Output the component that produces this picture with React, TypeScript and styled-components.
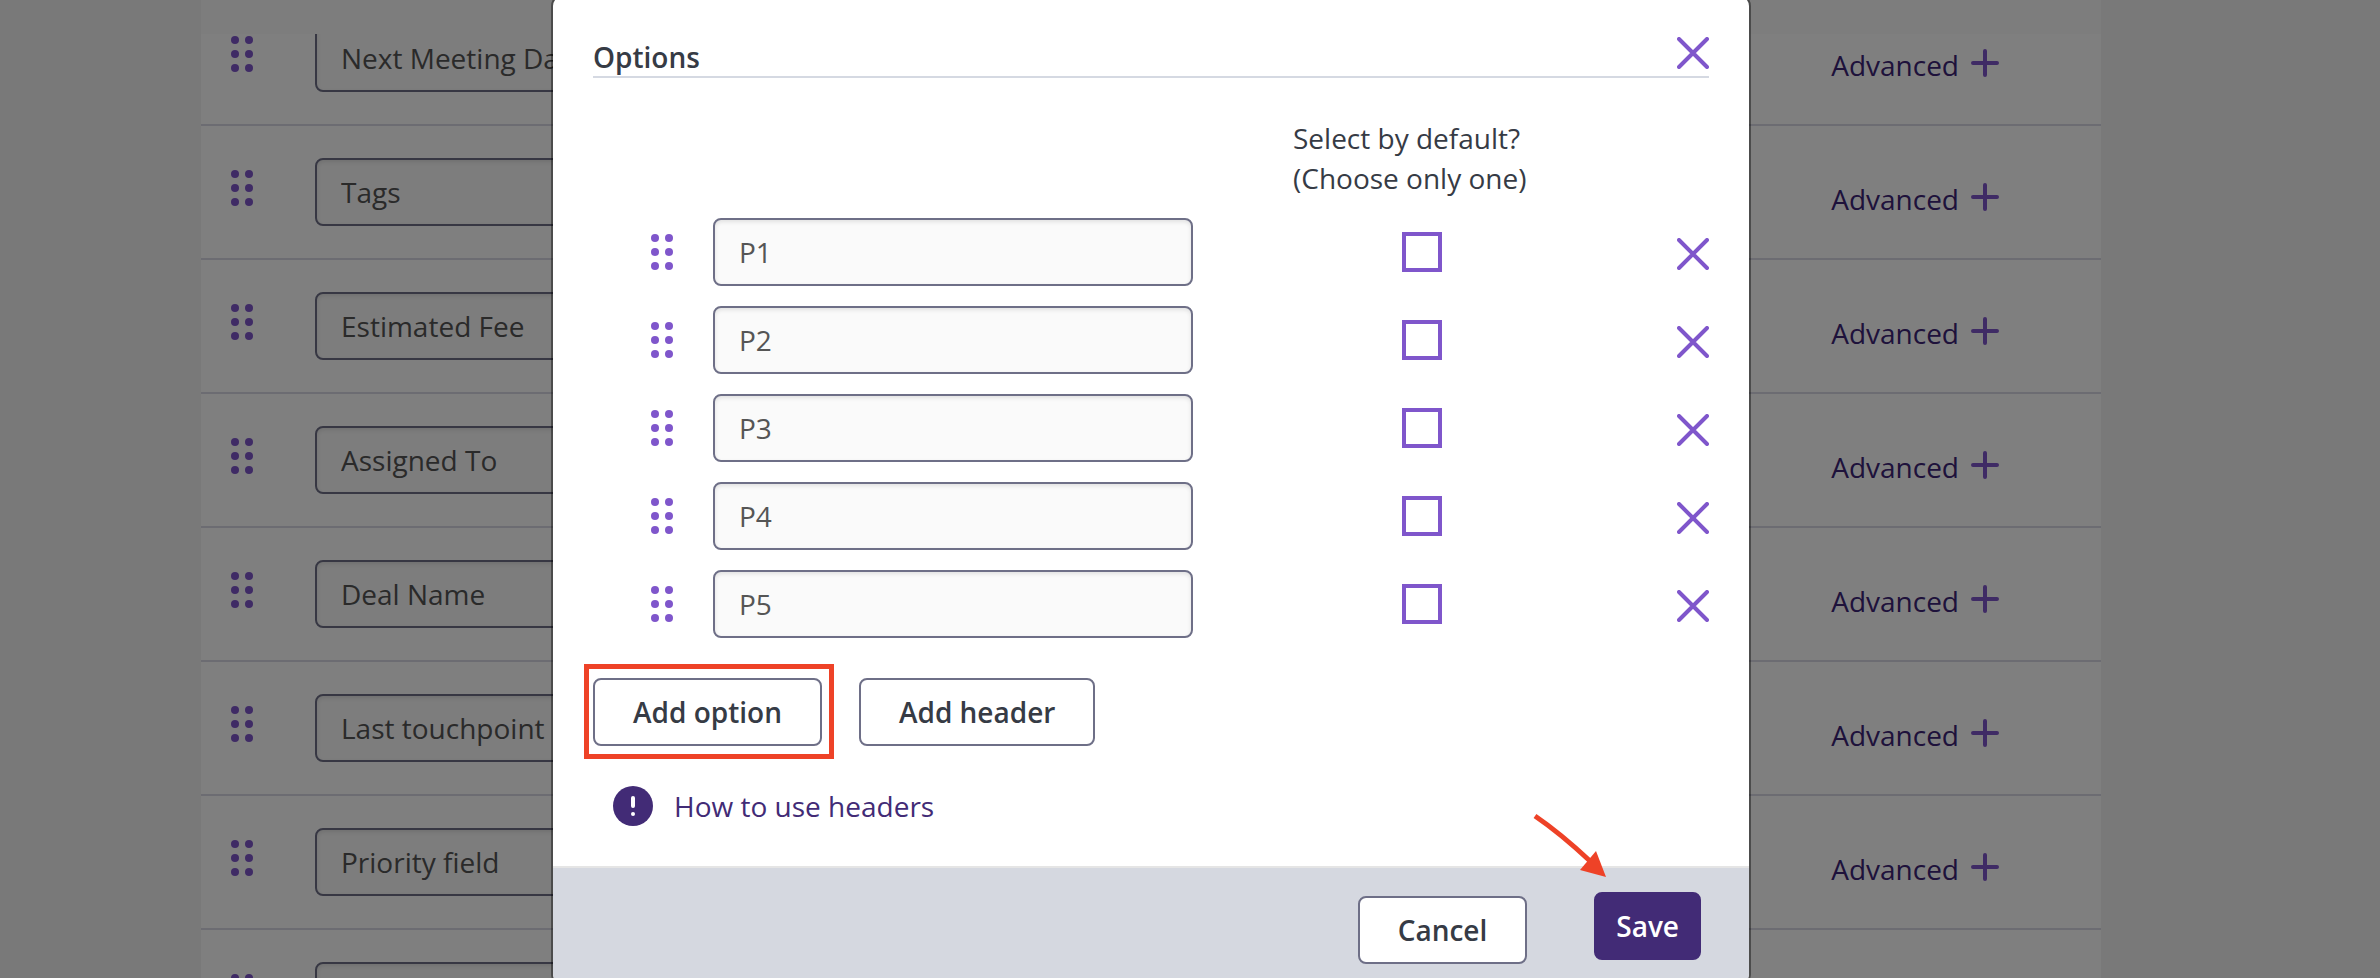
import React, { useState } from "react";
import styled, { createGlobalStyle } from "styled-components";

const color = {
  purple: "#7f56cb",
  deepPurple: "#422b76",
  ink: "#363b45",
  border: "#6e6f87",
  annotation: "#ee4227",
};

const GlobalStyle = createGlobalStyle`
  * { box-sizing: border-box; }
  html, body, #root { height: 100%; }
  body {
    margin: 0;
    overflow: hidden;
    background: #f2f2f2;
    color: ${color.ink};
    font: 400 28px/40px "Open Sans", sans-serif;
  }
  button, input { font: inherit; }
`;

const Page = styled.div`
  position: relative;
  height: 100%;
  overflow: hidden;
  padding: 0 279px 0 201px;
`;

const FieldPanel = styled.main`
  background: #fff;
  min-height: 100%;
`;

const PanelHeader = styled.div`
  position: relative;
  z-index: 1;
  height: 34px;
  background: #fbfbfb;
`;

const FieldList = styled.ul`
  list-style: none;
  margin: -42px 0 0;
  padding: 0;
`;

const FieldRow = styled.li`
  display: flex;
  align-items: flex-start;
  padding: 32px 102px 32px 30px;
  border-bottom: 2px solid #d9d9e4;
`;

const TextInput = styled.input<{ $wide?: boolean }>`
  width: ${(p) => (p.$wide ? "800px" : "480px")};
  height: 68px;
  padding: 0 24px;
  border: 2px solid ${color.border};
  border-radius: 8px;
  background: #fafafa;
  box-shadow: inset 0 2px 4px rgba(0, 0, 0, 0.1);
  color: #555;
  outline: none;
`;

const IconButton = styled.button`
  display: flex;
  padding: 0;
  border: 0;
  background: none;
  color: ${color.purple};
  cursor: pointer;
`;

const DragButton = styled(IconButton)<{ $gap: number }>`
  margin-top: 12px;
  margin-right: ${(p) => p.$gap}px;
  cursor: grab;
`;

const AdvancedButton = styled.button`
  display: flex;
  gap: 12px;
  margin: 21px 0 0 auto;
  padding: 0;
  border: 0;
  background: none;
  color: #3c2577;
  cursor: pointer;

  svg {
    margin-top: 4px;
    color: ${color.purple};
  }
`;

const Overlay = styled.div`
  position: absolute;
  z-index: 2;
  inset: 0;
  display: flex;
  justify-content: center;
  align-items: flex-start;
  padding-right: 78px;
  background: rgba(0, 0, 0, 0.5);
`;

const Dialog = styled.section`
  position: relative;
  width: 1200px;
  margin-top: -6px;
  border: 2px solid rgba(0, 0, 0, 0.4);
  border-radius: 12px;
  background: #fff;
  background-clip: padding-box;
`;

const DialogBody = styled.div`
  padding: 40px;
`;

const DialogHeader = styled.header`
  display: flex;
  justify-content: space-between;
  align-items: flex-end;
  height: 42px;
  padding-bottom: 7px;
  border-bottom: 2px solid #d5d9e2;
`;

const Title = styled.h2`
  margin: 0 0 -8px;
  font-size: 28px;
  line-height: 40px;
  font-weight: 600;
`;

const ColumnHint = styled.p`
  width: 416px;
  margin: 40px 0 0 auto;
  padding-bottom: 20px;
`;

const OptionList = styled.ul`
  display: grid;
  gap: 20px;
  list-style: none;
  margin: 0;
  padding: 0;
`;

const OptionRow = styled.li`
  display: flex;
  align-items: center;
  padding-left: 58px;
`;

const OptionDrag = styled(IconButton)`
  margin-right: 40px;
  cursor: grab;
`;

const DefaultCheck = styled.input`
  appearance: none;
  width: 40px;
  height: 40px;
  margin: 0 auto 0 209px;
  border: 4px solid ${color.purple};
  background: #fff;
  cursor: pointer;

  &:checked {
    box-shadow: inset 0 0 0 6px #fff;
    background: ${color.purple};
  }
`;

const RemoveButton = styled(IconButton)`
  padding-top: 4px;
`;

const Actions = styled.div`
  display: flex;
  gap: 37px;
  margin-top: 40px;
`;

const Button = styled.button<{ $primary?: boolean }>`
  height: 68px;
  padding: 0 ${(p) => (p.$primary ? 20 : 38)}px;
  border: 2px solid ${(p) => (p.$primary ? color.deepPurple : color.border)};
  border-radius: 8px;
  background: ${(p) => (p.$primary ? color.deepPurple : "#fff")};
  color: ${(p) => (p.$primary ? "#fff" : color.ink)};
  font-weight: 600;
  white-space: nowrap;
  cursor: pointer;
`;

const Highlight = styled.div`
  position: relative;

  &::after {
    content: "";
    position: absolute;
    inset: -14px -12px -13px -9px;
    border: 5px solid ${color.annotation};
    pointer-events: none;
  }
`;

const HelpLink = styled.a`
  display: flex;
  width: fit-content;
  align-items: center;
  gap: 21px;
  margin: 40px 0 0 20px;
  color: ${color.deepPurple};
  text-decoration: none;
`;

const DialogFooter = styled.footer`
  position: relative;
  display: flex;
  justify-content: flex-end;
  align-items: flex-start;
  gap: 67px;
  padding: 24px 48px 20px;
  border-top: 2px solid #e5e5e5;
  border-radius: 0 0 10px 10px;
  background: #d5d8e0;
`;

const CancelButton = styled(Button)`
  margin-top: 4px;
`;

const Arrow = styled.svg`
  position: absolute;
  right: 141px;
  top: -58px;
  pointer-events: none;
`;

const DragDots = () => (
  <svg width="22" height="36" viewBox="0 0 22 36" fill="currentColor" aria-hidden="true">
    {[4, 18, 32].map((y) => (
      <React.Fragment key={y}>
        <circle cx="4" cy={y} r="4" />
        <circle cx="18" cy={y} r="4" />
      </React.Fragment>
    ))}
  </svg>
);

const Cross = () => (
  <svg width="32" height="32" viewBox="0 0 32 32" fill="none" stroke="currentColor" strokeWidth="4" strokeLinecap="round" aria-hidden="true">
    <path d="M2 2 30 30M30 2 2 30" />
  </svg>
);

const Plus = () => (
  <svg width="28" height="28" viewBox="0 0 28 28" fill="none" stroke="currentColor" strokeWidth="4" strokeLinecap="round" aria-hidden="true">
    <path d="M14 2V26M2 14H26" />
  </svg>
);

const InfoMark = () => (
  <svg width="40" height="40" viewBox="0 0 40 40" aria-hidden="true">
    <circle cx="20" cy="20" r="20" fill={color.deepPurple} />
    <path d="M20 12V20" stroke="#fff" strokeWidth="4" strokeLinecap="round" />
    <circle cx="20" cy="28" r="2" fill="#fff" />
  </svg>
);

const fields = [
  "Next Meeting Date",
  "Tags",
  "Estimated Fee",
  "Assigned To",
  "Deal Name",
  "Last touchpoint",
  "Priority field",
  "",
];

const optionNames = ["P1", "P2", "P3", "P4", "P5"];

export default function App() {
  const [selected, setSelected] = useState<string | null>(null);

  return (
    <Page>
      <GlobalStyle />
      <FieldPanel>
        <PanelHeader />
        <FieldList>
          {fields.map((name, i) => (
            <FieldRow key={i}>
              <DragButton $gap={62} aria-label="Reorder field">
                <DragDots />
              </DragButton>
              <TextInput $wide defaultValue={name} aria-label="Field name" />
              {name && (
                <AdvancedButton>
                  Advanced <Plus />
                </AdvancedButton>
              )}
            </FieldRow>
          ))}
        </FieldList>
      </FieldPanel>

      <Overlay>
        <Dialog role="dialog" aria-modal="true" aria-labelledby="dialog-title">
          <DialogBody>
            <DialogHeader>
              <Title id="dialog-title">Options</Title>
              <IconButton aria-label="Close">
                <Cross />
              </IconButton>
            </DialogHeader>
            <ColumnHint>
              Select by default?
              <br />
              (Choose only one)
            </ColumnHint>
            <OptionList>
              {optionNames.map((name) => (
                <OptionRow key={name}>
                  <OptionDrag aria-label={`Reorder ${name}`}>
                    <DragDots />
                  </OptionDrag>
                  <TextInput defaultValue={name} aria-label="Option name" />
                  <DefaultCheck
                    type="checkbox"
                    aria-label={`Select ${name} by default`}
                    checked={selected === name}
                    onChange={() => setSelected(selected === name ? null : name)}
                  />
                  <RemoveButton aria-label={`Remove ${name}`}>
                    <Cross />
                  </RemoveButton>
                </OptionRow>
              ))}
            </OptionList>
            <Actions>
              <Highlight>
                <Button>Add option</Button>
              </Highlight>
              <Button>Add header</Button>
            </Actions>
            <HelpLink href="#headers">
              <InfoMark />
              How to use headers
            </HelpLink>
          </DialogBody>
          <DialogFooter>
            <Arrow width="80" height="72" viewBox="0 0 80 72" aria-hidden="true">
              <path d="M7 6Q32 23 62 51" fill="none" stroke={color.annotation} strokeWidth="5" />
              <path d="M78 67 52 60 68 41Z" fill={color.annotation} />
            </Arrow>
            <CancelButton>Cancel</CancelButton>
            <Button $primary>Save</Button>
          </DialogFooter>
        </Dialog>
      </Overlay>
    </Page>
  );
}
